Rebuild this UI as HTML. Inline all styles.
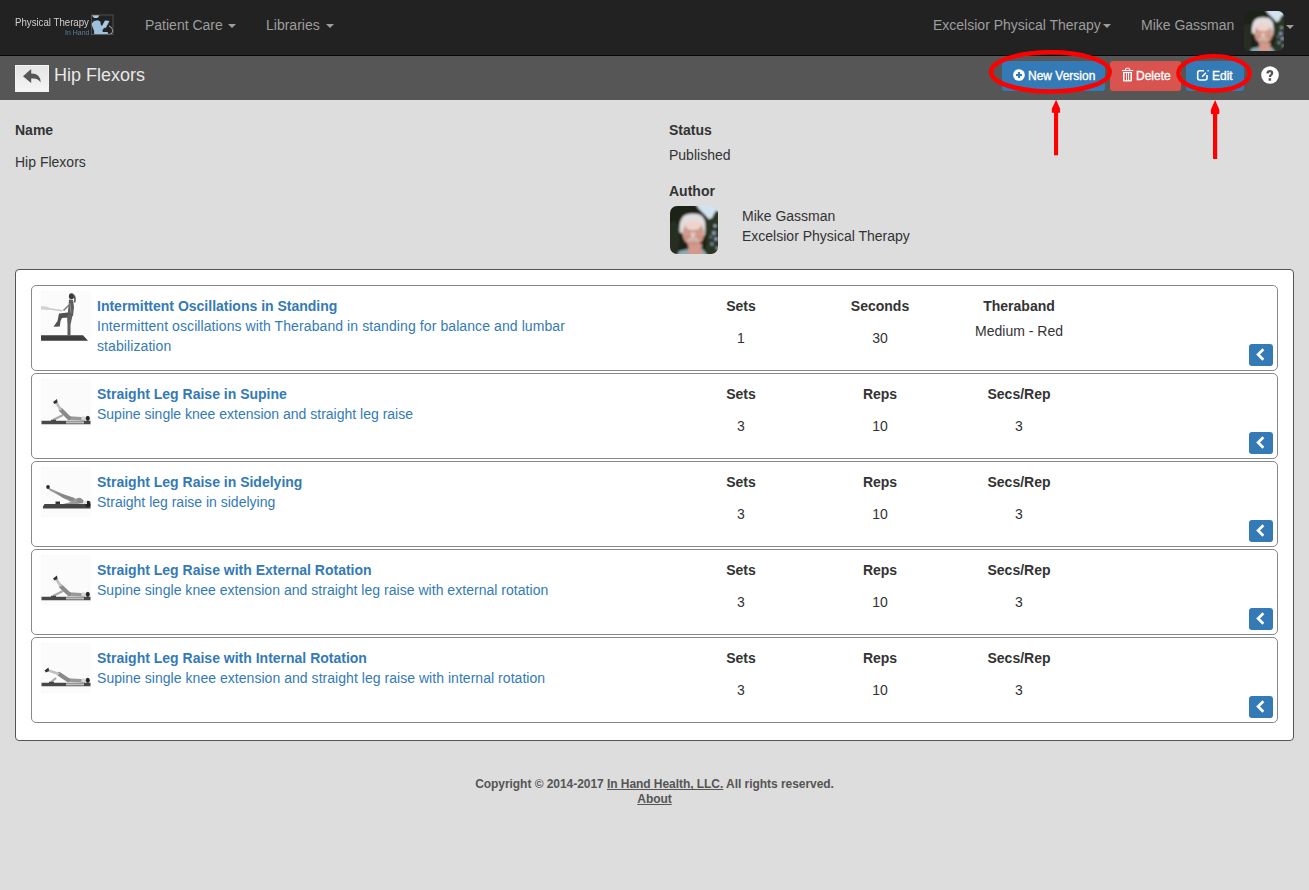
<!DOCTYPE html>
<html><head><meta charset="utf-8">
<style>
*{box-sizing:border-box;margin:0;padding:0}
html,body{width:1309px;height:890px;overflow:hidden}
body{background:#ddd;font-family:"Liberation Sans",sans-serif;font-size:14px;line-height:20px;color:#333;position:relative}
.abs{position:absolute;white-space:nowrap}
#nav{position:absolute;left:0;top:0;width:1309px;height:56px;background:#222;border-bottom:1px solid #080808}
.navlink{position:absolute;color:#9d9d9d;font-size:14px;line-height:20px;top:15px;white-space:nowrap}
.caret{display:inline-block;width:0;height:0;border-top:4px solid #9d9d9d;border-left:4px solid transparent;border-right:4px solid transparent;vertical-align:middle}
#sub{position:absolute;left:0;top:56px;width:1309px;height:44px;background:#565656}
#back{position:absolute;left:15px;top:65px;width:34px;height:27px;background:linear-gradient(#e4e4e4,#f4f4f4);border:1px solid #f2f2f2}
#title{position:absolute;left:54px;top:63px;font-size:18px;line-height:24px;color:#e8e8e8;white-space:nowrap}
.btn{position:absolute;top:61px;height:30px;border-radius:3px;color:#fff;font-size:12px;line-height:30px;white-space:nowrap}
.btn span{-webkit-text-stroke:0.35px #fff}
.lbl{position:absolute;font-weight:bold}
#panel{position:absolute;left:15px;top:269px;width:1279px;height:472px;background:#fff;border:1px solid #555;border-radius:4px}
.card{position:absolute;left:15px;width:1247px;height:86px;border:1px solid #888;border-radius:5px;background:#fff}
.thumb{position:absolute;left:9px;top:5px;width:50px;height:50px;background:#fbfbfb}
.ctitle{position:absolute;left:65px;top:10px;font-weight:bold;color:#337ab7;white-space:nowrap}
.cdesc{position:absolute;left:65px;top:30px;color:#337ab7;white-space:nowrap;letter-spacing:0.09px}
.sh{position:absolute;top:10px;width:140px;text-align:center;font-weight:bold}
.sv{position:absolute;top:42px;width:140px;text-align:center}
.cbtn{position:absolute;left:1217px;top:58px;width:24px;height:22px;background:#337ab7;border-radius:3px}
#foot{position:absolute;left:0;top:777px;width:1309px;text-align:center;font-size:12px;line-height:15px;font-weight:bold;color:#555;letter-spacing:-0.05px}
#foot u{text-decoration:underline;text-decoration-skip-ink:none}
</style></head>
<body>
<div id="nav">
<div class="abs" style="left:0;top:0;width:120px;height:50px">
<div class="abs" style="left:14.5px;top:15px;font-size:10.5px;line-height:14px;color:#d0d0d0;transform:scaleX(0.92);transform-origin:0 0">Physical Therapy</div>
<div class="abs" style="left:64.6px;top:26.5px;font-size:8px;line-height:11px;color:#5f7f99;transform:scaleX(0.87);transform-origin:0 0">In Hand</div>
<svg width="24" height="22" viewBox="0 0 24 22" style="position:absolute;left:91px;top:14px">
<path d="M1.1 1H8.4Q7.8 4.1 4.8 4.1Q1.7 4.1 1.1 1Z" fill="#a9c9e3"/>
<path d="M0.2 9.9L3 7L6.6 6.2L9.3 7.6L9.9 11.1L11.6 12.6L13.4 13.8L11.5 16L11.7 17.9H16.9V20.6H3.1V17L1.5 13Z" fill="#9dc0dc"/>
<path d="M14.2 6.8L18 7.3L14.5 13.8L11 12.6Z" fill="#a8cbe6" stroke="#c8dcec" stroke-width="0.6"/>
<path d="M18 12Q22 13.5 21.6 18Q20.5 20.8 16.5 20.6" stroke="#bbb" stroke-width="1" fill="none"/>
<rect x="0.4" y="1" width="21.6" height="19.6" fill="none" stroke="#5a5a5a" stroke-width="0.8"/>
</svg>
</div>
  <div class="navlink" style="left:145px">Patient Care <span class="caret" style="margin-left:1px"></span></div>
  <div class="navlink" style="left:266px">Libraries <span class="caret" style="margin-left:2px"></span></div>
  <div class="navlink" style="left:933px">Excelsior Physical Therapy<span class="caret" style="margin-left:2px"></span></div>
  <div class="navlink" style="left:1141px">Mike Gassman</div>
  <div class="abs" style="left:1244px;top:11px;width:40px;height:40px;border-radius:6px;overflow:hidden"><svg width="40" height="40" viewBox="0 0 48 48" style="display:block">
<defs><filter id="bl40" x="-5%" y="-5%" width="110%" height="110%"><feGaussianBlur stdDeviation="1.2"/></filter></defs>
<g filter="url(#bl40)">
<rect x="-2" y="-2" width="52" height="52" fill="#1b2017"/>
<path d="M-2 18L5 14L10 22L8 50H-2Z" fill="#262e20"/>
<path d="M26 -2H50V4L46 5L43 13L40 15L36 10L31 5L28 2Z" fill="#d3e2ee"/>
<path d="M36 14L42 12L45 6L50 5V50H34L37 34Z" fill="#2a3421"/>
<circle cx="44" cy="27" r="2" fill="#8da3bb"/><circle cx="46" cy="33" r="1.8" fill="#9fb2c8"/><circle cx="42" cy="38" r="1.7" fill="#7e93ab"/><circle cx="45" cy="20" r="1.4" fill="#b5c6d8"/><circle cx="41" cy="31" r="1.3" fill="#6d8299"/><circle cx="47" cy="42" r="1.4" fill="#8fa4b9"/>
<path d="M7 50L9 45L18 43L25 46L33 43L38 50Z" fill="#8ea7b2"/>
<path d="M18 38H32L31 50H19Z" fill="#d3998a"/>
<g transform="translate(1.6 3.2) scale(0.88)"><path d="M9 26Q8 9 17 6Q24 4 32 6Q39.5 9 38.5 24L38 30L34 29L14 29Z" fill="#dcd8da"/>
<ellipse cx="24.8" cy="27.5" rx="12.3" ry="14" fill="#d49c8c"/>
<ellipse cx="24.5" cy="18" rx="9" ry="6" fill="#efd3ca"/>
<path d="M10 25Q9.5 10 17.5 7.5Q24 5.5 31 7.5Q38 10 38 23L37 27L35.5 19Q33 13.5 24 13.5Q15 13.5 13.5 19L12.5 26Z" fill="#e2dee0"/>
<path d="M13 24.5H37" stroke="#ab9c98" stroke-width="1.2"/>
<ellipse cx="24.3" cy="29" rx="2.4" ry="3.2" fill="#ebc7bc"/>
<ellipse cx="17.5" cy="32" rx="3" ry="2.5" fill="#cf8e80"/>
<ellipse cx="32" cy="32" rx="3" ry="2.5" fill="#cf8e80"/>
<path d="M18 34Q24.5 31 31 34L30 36.5Q24.5 34.5 19 36.5Z" fill="#c4bfbc"/>
<path d="M20 39Q24.5 40.5 29 39" stroke="#b77468" stroke-width="0.9" fill="none"/>
</g></g>
</svg></div>
  <span class="caret abs" style="left:1286px;top:25px"></span>
</div>
<div id="sub"></div>
<div id="back"><svg width="18" height="14" viewBox="0 0 18 14" style="position:absolute;left:7px;top:3px">
<path d="M0 7.2L8.2 0V4.4Q17.5 4.2 17.6 13.4Q15 8.8 8.2 9.6V14Z" fill="#555"/>
</svg></div>
<div id="title">Hip Flexors</div>
<div class="btn" style="left:1002px;width:103px;background:#337ab7"><svg width="12" height="12" viewBox="0 0 12 12" style="position:absolute;left:11px;top:8px">
<circle cx="6" cy="6" r="5.85" fill="#fff"/>
<path d="M3 6H9M6 3V9" stroke="#337ab7" stroke-width="2.2"/>
</svg><span style="position:absolute;left:26px">New Version</span></div>
<div class="btn" style="left:1110px;width:71px;background:#d9534f"><svg width="14" height="16" viewBox="0 0 14 16" style="position:absolute;left:11px;top:6px">
<rect x="1" y="3" width="11.3" height="1.1" fill="#fff"/>
<path d="M4.5 3.2V1.8Q4.5 1.3 5 1.3H8.2Q8.7 1.3 8.7 1.8V3.2" stroke="#fff" stroke-width="1" fill="none"/>
<path d="M2 5H11V13.3Q11 14.5 9.8 14.5H3.2Q2 14.5 2 13.3Z" fill="#fff"/>
<rect x="4" y="6" width="1" height="7.2" fill="#d9534f"/>
<rect x="6" y="6" width="1" height="7.2" fill="#d9534f"/>
<rect x="8" y="6" width="1" height="7.2" fill="#d9534f"/>
<rect x="3.2" y="5.9" width="0.8" height="7.4" fill="#e8a09d"/>
<rect x="9" y="5.9" width="0.8" height="7.4" fill="#e8a09d"/>
</svg><span style="position:absolute;left:26px">Delete</span></div>
<div class="btn" style="left:1186px;width:58px;background:#337ab7"><svg width="14" height="13" viewBox="0 0 14 13" style="position:absolute;left:10px;top:8px">
<path d="M8 1.7H3.7Q1.7 1.7 1.7 3.7V9Q1.7 11 3.7 11H9Q11 11 11 9V6" stroke="#fff" stroke-width="1.6" fill="none"/>
<path d="M6.2 7.6L10 3.8" stroke="#fff" stroke-width="1.5"/>
<rect x="11.4" y="1" width="1.4" height="1.4" fill="#fff"/>
</svg><span style="position:absolute;left:26px">Edit</span></div>
<svg width="18" height="18" viewBox="0 0 18 18" style="position:absolute;left:1261px;top:66px">
<circle cx="9" cy="9" r="8.8" fill="#fff"/>
<path d="M6.5 7.4Q6.5 5.2 9 5.2Q11.1 5.2 11.1 7Q11.1 8.2 10 8.9Q8.9 9.5 8.9 11" stroke="#555" stroke-width="2.3" fill="none"/>
<rect x="7.6" y="12.2" width="2.5" height="2.5" fill="#555"/>
</svg>

<div class="lbl" style="left:15px;top:120px">Name</div>
<div class="abs" style="left:15px;top:152px">Hip Flexors</div>
<div class="lbl" style="left:669px;top:120px">Status</div>
<div class="abs" style="left:669px;top:145px">Published</div>
<div class="lbl" style="left:669px;top:181px">Author</div>
<div class="abs" style="left:670px;top:206px;width:48px;height:48px;border-radius:7px;overflow:hidden"><svg width="48" height="48" viewBox="0 0 48 48" style="display:block">
<defs><filter id="bl48" x="-5%" y="-5%" width="110%" height="110%"><feGaussianBlur stdDeviation="1.2"/></filter></defs>
<g filter="url(#bl48)">
<rect x="-2" y="-2" width="52" height="52" fill="#1b2017"/>
<path d="M-2 18L5 14L10 22L8 50H-2Z" fill="#262e20"/>
<path d="M26 -2H50V4L46 5L43 13L40 15L36 10L31 5L28 2Z" fill="#d3e2ee"/>
<path d="M36 14L42 12L45 6L50 5V50H34L37 34Z" fill="#2a3421"/>
<circle cx="44" cy="27" r="2" fill="#8da3bb"/><circle cx="46" cy="33" r="1.8" fill="#9fb2c8"/><circle cx="42" cy="38" r="1.7" fill="#7e93ab"/><circle cx="45" cy="20" r="1.4" fill="#b5c6d8"/><circle cx="41" cy="31" r="1.3" fill="#6d8299"/><circle cx="47" cy="42" r="1.4" fill="#8fa4b9"/>
<path d="M7 50L9 45L18 43L25 46L33 43L38 50Z" fill="#8ea7b2"/>
<path d="M18 38H32L31 50H19Z" fill="#d3998a"/>
<g transform="translate(1.6 3.2) scale(0.88)"><path d="M9 26Q8 9 17 6Q24 4 32 6Q39.5 9 38.5 24L38 30L34 29L14 29Z" fill="#dcd8da"/>
<ellipse cx="24.8" cy="27.5" rx="12.3" ry="14" fill="#d49c8c"/>
<ellipse cx="24.5" cy="18" rx="9" ry="6" fill="#efd3ca"/>
<path d="M10 25Q9.5 10 17.5 7.5Q24 5.5 31 7.5Q38 10 38 23L37 27L35.5 19Q33 13.5 24 13.5Q15 13.5 13.5 19L12.5 26Z" fill="#e2dee0"/>
<path d="M13 24.5H37" stroke="#ab9c98" stroke-width="1.2"/>
<ellipse cx="24.3" cy="29" rx="2.4" ry="3.2" fill="#ebc7bc"/>
<ellipse cx="17.5" cy="32" rx="3" ry="2.5" fill="#cf8e80"/>
<ellipse cx="32" cy="32" rx="3" ry="2.5" fill="#cf8e80"/>
<path d="M18 34Q24.5 31 31 34L30 36.5Q24.5 34.5 19 36.5Z" fill="#c4bfbc"/>
<path d="M20 39Q24.5 40.5 29 39" stroke="#b77468" stroke-width="0.9" fill="none"/>
</g></g>
</svg></div>
<div class="abs" style="left:742px;top:206px">Mike Gassman</div>
<div class="abs" style="left:742px;top:226px">Excelsior Physical Therapy</div>

<div id="panel">
<div class="card" style="top:15px"><div class="thumb"><svg width="50" height="50" viewBox="0 0 50 50" style="display:block">
<path d="M0 44.3H42L47 49.7H0Z" fill="#3e3e3e"/>
<path d="M0 16.5L8 17.8L21.5 19.8" stroke="#c8c8c8" stroke-width="1.4" fill="none"/>
<path d="M0 15L7.5 16L8 19L0 18.5Z" fill="#d2d2d2"/>
<ellipse cx="30.5" cy="5.2" rx="2.6" ry="3" fill="#3a3a3a"/>
<path d="M32.5 4Q35 7 33.5 11.5" stroke="#555" stroke-width="1.6" fill="none"/>
<path d="M28 8.5L32 9L33 16L32 25L26.5 25L27.5 15Z" fill="#5c5c5c"/>
<path d="M27 21.5L18 22.5L16.5 30L12.5 35.8L18.8 35.5L19.5 30L21 27L27.5 26.5Z" fill="#505050"/>
<path d="M26 24.5L31.5 24.5L29.5 34L29.5 44.8L26.5 44.8L26.5 34Z" fill="#5e5e5e"/>
<path d="M28 14L22.5 19.5" stroke="#777" stroke-width="1.4"/>
<path d="M29 12L30 22" stroke="#9a9a9a" stroke-width="0.8"/>
</svg></div><div class="ctitle">Intermittent Oscillations in Standing</div><div class="cdesc" style="letter-spacing:0.09px">Intermittent oscillations with Theraband in standing for balance and lumbar<br>stabilization</div><div class="sh" style="left:639px">Sets</div><div class="sv" style="left:639px">1</div><div class="sh" style="left:778px">Seconds</div><div class="sv" style="left:778px">30</div><div class="sh" style="left:917px">Theraband</div><div class="sv" style="left:917px;top:35px">Medium - Red</div><div class="cbtn"><svg width="24" height="22" viewBox="0 0 24 22" style="display:block">
<path d="M13.4 6.2L9.1 10.5L13.4 14.8" stroke="#fff" stroke-width="2.7" fill="none" stroke-linecap="square"/>
</svg></div></div>
<div class="card" style="top:103px"><div class="thumb"><svg width="50" height="50" viewBox="0 0 50 50" style="display:block">
<path d="M0.5 41.8H49.5V45.3H0.5Z" fill="#484848"/>
<path d="M25 42.3H43V44.5H25Z" fill="#bdbdbd"/>
<path d="M28 39L44 40.0" stroke="#999" stroke-width="3.4"/>
<path d="M40.5 37.5H45.5V41.0H40.5Z" fill="#d8d8d8"/>
<ellipse cx="46.8" cy="39.3" rx="2" ry="2.6" fill="#252525"/>
<path d="M22 36L12 41" stroke="#aaa" stroke-width="2.2"/>
<path d="M10 41.5H15" stroke="#444" stroke-width="1.5"/>
<path d="M20 31L28 39" stroke="#8a8a8a" stroke-width="4.2" stroke-linecap="round"/>
<path d="M14.5 22.5L20 31" stroke="#c0c0c0" stroke-width="2.8"/>
<path d="M12.0 23.0L16.0 20.0L16.5 23.5L13.5 25.0Z" fill="#333"/>
</svg></div><div class="ctitle">Straight Leg Raise in Supine</div><div class="cdesc" style="letter-spacing:0px">Supine single knee extension and straight leg raise</div><div class="sh" style="left:639px">Sets</div><div class="sv" style="left:639px">3</div><div class="sh" style="left:778px">Reps</div><div class="sv" style="left:778px">10</div><div class="sh" style="left:917px">Secs/Rep</div><div class="sv" style="left:917px">3</div><div class="cbtn"><svg width="24" height="22" viewBox="0 0 24 22" style="display:block">
<path d="M13.4 6.2L9.1 10.5L13.4 14.8" stroke="#fff" stroke-width="2.7" fill="none" stroke-linecap="square"/>
</svg></div></div>
<div class="card" style="top:191px"><div class="thumb"><svg width="50" height="50" viewBox="0 0 50 50" style="display:block">
<path d="M2 39.5L3.5 37H49.5V41.5H2Z" fill="#454545"/>
<path d="M34 33Q38 29 41 32L45 36L34 37Z" fill="#8c8c8c"/>
<path d="M7 20.5L22 27L36 32L37 37L22 37L30 35L8 23Z" fill="#9a9a9a"/>
<path d="M14 25L22 27.5L33 31L32 34L22 31Z" fill="#888"/>
<ellipse cx="47" cy="37" rx="2.5" ry="3.2" fill="#222"/>
<path d="M42 34H46V37H42Z" fill="#ddd"/>
<ellipse cx="7" cy="20" rx="1.8" ry="2" fill="#2a2a2a"/>
<path d="M14.5 34.5H19V37H14.5Z" fill="#333"/>
</svg></div><div class="ctitle">Straight Leg Raise in Sidelying</div><div class="cdesc" style="letter-spacing:0px">Straight leg raise in sidelying</div><div class="sh" style="left:639px">Sets</div><div class="sv" style="left:639px">3</div><div class="sh" style="left:778px">Reps</div><div class="sv" style="left:778px">10</div><div class="sh" style="left:917px">Secs/Rep</div><div class="sv" style="left:917px">3</div><div class="cbtn"><svg width="24" height="22" viewBox="0 0 24 22" style="display:block">
<path d="M13.4 6.2L9.1 10.5L13.4 14.8" stroke="#fff" stroke-width="2.7" fill="none" stroke-linecap="square"/>
</svg></div></div>
<div class="card" style="top:279px"><div class="thumb"><svg width="50" height="50" viewBox="0 0 50 50" style="display:block">
<path d="M0.5 41.8H49.5V45.3H0.5Z" fill="#484848"/>
<path d="M25 42.3H43V44.5H25Z" fill="#bdbdbd"/>
<path d="M28 39L44 40.0" stroke="#999" stroke-width="3.4"/>
<path d="M40.5 37.5H45.5V41.0H40.5Z" fill="#d8d8d8"/>
<ellipse cx="46.8" cy="39.3" rx="2" ry="2.6" fill="#252525"/>
<path d="M22 36L12 41" stroke="#aaa" stroke-width="2.2"/>
<path d="M10 41.5H15" stroke="#444" stroke-width="1.5"/>
<path d="M20 31.5L28 39" stroke="#8a8a8a" stroke-width="4.2" stroke-linecap="round"/>
<path d="M14.5 23L20 31.5" stroke="#c0c0c0" stroke-width="2.8"/>
<path d="M12.0 23.5L16.0 20.5L16.5 24L13.5 25.5Z" fill="#333"/>
</svg></div><div class="ctitle">Straight Leg Raise with External Rotation</div><div class="cdesc" style="letter-spacing:0.03px">Supine single knee extension and straight leg raise with external rotation</div><div class="sh" style="left:639px">Sets</div><div class="sv" style="left:639px">3</div><div class="sh" style="left:778px">Reps</div><div class="sv" style="left:778px">10</div><div class="sh" style="left:917px">Secs/Rep</div><div class="sv" style="left:917px">3</div><div class="cbtn"><svg width="24" height="22" viewBox="0 0 24 22" style="display:block">
<path d="M13.4 6.2L9.1 10.5L13.4 14.8" stroke="#fff" stroke-width="2.7" fill="none" stroke-linecap="square"/>
</svg></div></div>
<div class="card" style="top:367px"><div class="thumb"><svg width="50" height="50" viewBox="0 0 50 50" style="display:block">
<path d="M0.5 39.8H49.5V43.3H0.5Z" fill="#484848"/>
<path d="M25 40.3H43V42.5H25Z" fill="#bdbdbd"/>
<path d="M27 37L44 38.0" stroke="#999" stroke-width="3.4"/>
<path d="M40.5 35.5H45.5V39.0H40.5Z" fill="#d8d8d8"/>
<ellipse cx="46.8" cy="37.3" rx="2" ry="2.6" fill="#252525"/>
<path d="M15 35L10 39" stroke="#aaa" stroke-width="2.2"/>
<path d="M8 39.5H13" stroke="#444" stroke-width="1.5"/>
<path d="M18 31L27 37" stroke="#8a8a8a" stroke-width="4.2" stroke-linecap="round"/>
<path d="M6 27L18 31" stroke="#c0c0c0" stroke-width="2.8"/>
<path d="M3.5 27.5L7.5 24.5L8 28L5 29.5Z" fill="#333"/>
</svg></div><div class="ctitle">Straight Leg Raise with Internal Rotation</div><div class="cdesc" style="letter-spacing:0.04px">Supine single knee extension and straight leg raise with internal rotation</div><div class="sh" style="left:639px">Sets</div><div class="sv" style="left:639px">3</div><div class="sh" style="left:778px">Reps</div><div class="sv" style="left:778px">10</div><div class="sh" style="left:917px">Secs/Rep</div><div class="sv" style="left:917px">3</div><div class="cbtn"><svg width="24" height="22" viewBox="0 0 24 22" style="display:block">
<path d="M13.4 6.2L9.1 10.5L13.4 14.8" stroke="#fff" stroke-width="2.7" fill="none" stroke-linecap="square"/>
</svg></div></div>

</div>

<div id="foot">Copyright © 2014-2017 <u>In Hand Health, LLC.</u> All rights reserved.<br><u>About</u></div>
<svg width="1309" height="890" viewBox="0 0 1309 890" style="position:absolute;left:0;top:0;pointer-events:none">
<ellipse cx="1050.4" cy="71.9" rx="59.3" ry="19.6" stroke="#ff0000" stroke-width="4.5" fill="none"/>
<ellipse cx="1214" cy="73.3" rx="35.7" ry="17.2" stroke="#ff0000" stroke-width="4.4" fill="none"/>
<path d="M1056.1 99.7L1060.1 108.8V112.7H1058.1V155.2H1054V112.7H1051.8V108.8Z" fill="#ff0000"/>
<path d="M1215.1 100.1L1219.3 109.5V113.9H1217.2V159H1213V113.9H1210.9V109.5Z" fill="#ff0000"/>
</svg>
</body></html>
